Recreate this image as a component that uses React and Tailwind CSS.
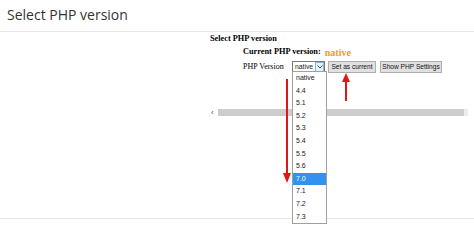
import React from "react";

const versions = ["native", "4.4", "5.1", "5.2", "5.3", "5.4", "5.5", "5.6", "7.0", "7.1", "7.2", "7.3"];

const DownArrow = ({ className }) => (
  <svg className={className} width="8" height="104" viewBox="0 0 8 104">
    <line x1="4" y1="0" x2="4" y2="96" stroke="#e3151a" strokeWidth="2" />
    <polygon points="0,94 8,94 4,104" fill="#e3151a" />
  </svg>
);

const UpArrow = ({ className }) => (
  <svg className={className} width="8" height="28" viewBox="0 0 8 28">
    <line x1="4" y1="8" x2="4" y2="28" stroke="#e3151a" strokeWidth="2" />
    <polygon points="0,9 8,9 4,0" fill="#e3151a" />
  </svg>
);

export default function App() {
  return (
    <div className="relative w-[474px] h-[228px] bg-white overflow-hidden">
      {/* page header */}
      <div className="h-[32px] px-[7px] flex items-center border-b border-[#e8e8e8]">
        <h1 className="text-[14px] text-[#333] font-['Open_Sans',sans-serif] -mt-[2px]">Select PHP version</h1>
      </div>

      {/* main panel */}
      <div className="h-[187px] border-b border-[#e8e8e8] pl-[210px] pt-[2px] font-['Liberation_Serif',serif] text-black">
        <div className="text-[8.3px] font-bold leading-[10px]">Select PHP version</div>

        <div className="pl-[33px]">
          <div className="flex items-center h-[13px] mt-[2px]">
            <span className="text-[8.3px] font-bold">Current PHP version:</span>
            <span className="ml-[4px] text-[10px] font-bold text-[#f39c12]">native</span>
          </div>

          <div className="flex items-center h-[14px] mt-[1px]">
            <span className="text-[8px] w-[49px]">PHP Version</span>
            <div className="relative flex h-[12px] w-[33px] border border-[#7a7a7a] bg-white font-['Liberation_Sans',sans-serif]">
              <span className="flex-1 text-[6.8px] leading-[10px] pl-[2px] text-[#222]">native</span>
              <span className="w-[9px] border border-[#86b6e6] bg-[#e5f1fb] flex items-center justify-center">
                <svg width="6" height="4" viewBox="0 0 6 4">
                  <polyline points="0.5,0.5 3,3 5.5,0.5" fill="none" stroke="#333" strokeWidth="0.9" />
                </svg>
              </span>
            </div>
            <button className="ml-[3px] h-[12px] w-[48px] border border-[#adadad] bg-[#e1e1e1] text-[6.6px] leading-[10px] text-[#111] font-['Liberation_Sans',sans-serif]">
              Set as current
            </button>
            <button className="ml-[4px] h-[12px] w-[62px] border border-[#adadad] bg-[#e1e1e1] text-[6.6px] leading-[10px] text-[#111] font-['Liberation_Sans',sans-serif] whitespace-nowrap">
              Show PHP Settings
            </button>
          </div>
        </div>

        {/* horizontal scrollbar */}
        <div className="flex items-center h-[7px] mt-[35px] font-['Liberation_Sans',sans-serif]">
          <span className="w-[8px] text-[8px] leading-[7px] text-[#444] pl-[1px]">‹</span>
          <div className="w-[246px] h-[7px] bg-[#cdcdcd]" />
          <div className="w-[4px] h-[7px] bg-[#ececec]" />
        </div>
      </div>

      {/* open select list */}
      <ul className="absolute left-[292px] top-[71px] w-[35px] bg-white border border-[#a0a0a0] font-['Liberation_Sans',sans-serif]">
        {versions.map((v) => (
          <li
            key={v}
            className={`h-[12.6px] pl-[3px] text-[7px] leading-[12.6px] ${
              v === "7.0" ? "bg-[#3391f0] text-white" : "text-[#222]"
            }`}
          >
            {v}
          </li>
        ))}
      </ul>

      {/* annotation arrows */}
      <DownArrow className="absolute left-[283px] top-[79px]" />
      <UpArrow className="absolute left-[342px] top-[73px]" />
    </div>
  );
}
